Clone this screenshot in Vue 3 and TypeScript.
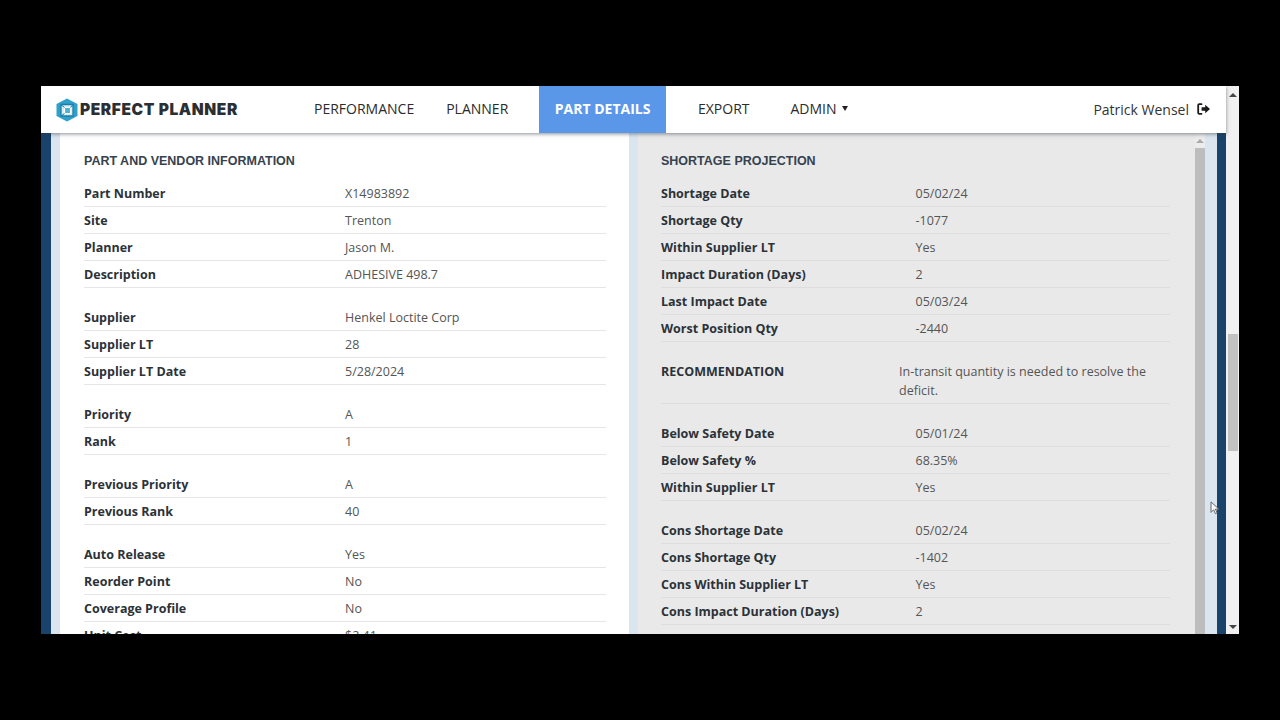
<script setup lang="ts">
interface Row { label: string; value: string; wide?: boolean }
const nav = ['PERFORMANCE', 'PLANNER', 'PART DETAILS', 'EXPORT']
const left: Row[][] = [
  [
    { label: 'Part Number', value: 'X14983892' },
    { label: 'Site', value: 'Trenton' },
    { label: 'Planner', value: 'Jason M.' },
    { label: 'Description', value: 'ADHESIVE 498.7' },
  ],
  [
    { label: 'Supplier', value: 'Henkel Loctite Corp' },
    { label: 'Supplier LT', value: '28' },
    { label: 'Supplier LT Date', value: '5/28/2024' },
  ],
  [
    { label: 'Priority', value: 'A' },
    { label: 'Rank', value: '1' },
  ],
  [
    { label: 'Previous Priority', value: 'A' },
    { label: 'Previous Rank', value: '40' },
  ],
  [
    { label: 'Auto Release', value: 'Yes' },
    { label: 'Reorder Point', value: 'No' },
    { label: 'Coverage Profile', value: 'No' },
    { label: 'Unit Cost', value: '$2.41' },
  ],
]
const right: Row[][] = [
  [
    { label: 'Shortage Date', value: '05/02/24' },
    { label: 'Shortage Qty', value: '-1077' },
    { label: 'Within Supplier LT', value: 'Yes' },
    { label: 'Impact Duration (Days)', value: '2' },
    { label: 'Last Impact Date', value: '05/03/24' },
    { label: 'Worst Position Qty', value: '-2440' },
  ],
  [
    { label: 'RECOMMENDATION', value: 'In-transit quantity is needed to resolve the deficit.', wide: true },
  ],
  [
    { label: 'Below Safety Date', value: '05/01/24' },
    { label: 'Below Safety %', value: '68.35%' },
    { label: 'Within Supplier LT', value: 'Yes' },
  ],
  [
    { label: 'Cons Shortage Date', value: '05/02/24' },
    { label: 'Cons Shortage Qty', value: '-1402' },
    { label: 'Cons Within Supplier LT', value: 'Yes' },
    { label: 'Cons Impact Duration (Days)', value: '2' },
    { label: 'Cons Last Impact Date', value: '05/03/24' },
  ],
]
</script>

<template>
  <div class="stage">
    <div class="window">
      <div class="page">
        <header class="topbar">
          <div class="brand">
            <svg class="logo" viewBox="0 0 22 24" width="22" height="24" aria-hidden="true">
              <path d="M11 .5 21.500 6v12L11 23.500.5 18V6z" fill="#2f9fcb" />
              <path d="M5 6.500h12v11.500H5z" fill="#d8eef6" />
              <path d="M5 6.500h12v11.500H5z" fill="none" stroke="#1c7ea6" stroke-width="1.300" />
              <path d="M8.500 9.500h6v6h-6z" fill="#4fb0d4" stroke="#fff" stroke-width="1.200" />
              <path d="M5 6.500 8.500 9.500M17 6.500 14.500 9.500M5 18 8.500 15.500" stroke="#1c7ea6" stroke-width="1" />
            </svg>
            <span class="brand-name">PERFECT PLANNER</span>
          </div>
          <nav class="nav">
            <a
              v-for="item in nav"
              :key="item"
              class="nav-item"
              :class="{ active: item === 'PART DETAILS' }"
            >{{ item }}</a>
            <a class="nav-item admin">ADMIN<span class="caret"></span></a>
          </nav>
          <div class="user">
            <span>Patrick Wensel</span>
            <svg viewBox="0 0 14 12" width="14" height="12" aria-hidden="true">
              <path d="M4.500 1.200H2.300C1.600 1.200 1.200 1.600 1.200 2.300v7.400c0 .7.4 1.100 1.100 1.100h2.200" fill="none" stroke="#1a1a1a" stroke-width="1.800" stroke-linecap="round" />
              <path d="M8.200 1.800 13 6 8.200 10.200V7.800H4.600V4.200h3.600z" fill="#1a1a1a" />
            </svg>
          </div>
        </header>
        <main class="content">
          <div class="panel-wrap">
            <section class="card">
              <h2 class="card-title">PART AND VENDOR INFORMATION</h2>
              <div v-for="(group, g) in left" :key="g" class="group">
                <div v-for="row in group" :key="row.label" class="row">
                  <span class="label">{{ row.label }}</span>
                  <span class="value">{{ row.value }}</span>
                </div>
              </div>
            </section>
            <div class="scroll-pane">
              <section class="card shaded">
                <h2 class="card-title">SHORTAGE PROJECTION</h2>
                <div v-for="(group, g) in right" :key="g" class="group">
                  <div v-for="row in group" :key="row.label" class="row" :class="{ wide: row.wide }">
                    <span class="label">{{ row.label }}</span>
                    <span class="value">{{ row.value }}</span>
                  </div>
                </div>
              </section>
              <div class="inner-scroll">
                <span class="arrow up small"></span>
                <span class="inner-thumb"></span>
              </div>
            </div>
          </div>
        </main>
      </div>
      <div class="outer-scroll">
        <span class="arrow up"></span>
        <span class="outer-thumb"></span>
        <span class="arrow down"></span>
      </div>
      <svg class="cursor" viewBox="0 0 10 16" width="9" height="14" aria-hidden="true">
        <path d="M1 1v12l3-3 2 4.500 2-1-2-4.200h4z" fill="#f4f6f8" stroke="#555" stroke-width="1" />
      </svg>
    </div>
  </div>
</template>

<style>
html,
body {
  margin: 0;
  background: #000;
}
</style>

<style scoped>
.stage {
  width: 1280px;
  height: 720px;
  box-sizing: border-box;
  padding: 86px 41px;
  background: #000;
  overflow: hidden;
}
.window {
  position: relative;
  display: flex;
  width: 1198px;
  height: 548px;
  overflow: hidden;
  background: #fff;
}
.page {
  flex: 1;
  min-width: 0;
  display: flex;
  flex-direction: column;
}
.topbar {
  position: relative;
  z-index: 2;
  flex: none;
  height: 47px;
  display: flex;
  align-items: center;
  background: #fff;
  box-shadow: 0 1px 4px rgba(40, 50, 60, 0.55);
}
.brand {
  width: 257px;
  box-sizing: border-box;
  padding-left: 15px;
  display: flex;
  align-items: center;
}
.logo {
  flex: none;
}
.brand-name {
  margin-left: 2px;
  font: 900 15.500px "Inter", "Liberation Sans", sans-serif;
  letter-spacing: 0.600px;
  color: #2b2f33;
  white-space: nowrap;
}
.nav {
  display: flex;
  align-items: stretch;
  height: 47px;
}
.nav-item {
  display: flex;
  align-items: center;
  padding: 0 16px 2px;
  font: 400 14px "Open Sans", sans-serif;
  color: #2b2b2b;
  white-space: nowrap;
}
.nav-item.active {
  margin: 0 16px 0 15px;
  padding: 0 15.500px 2px;
  background: #5b97e8;
  color: #fff;
  font-weight: 700;
}
.admin {
  margin-left: 9px;
}
.caret {
  margin-left: 5px;
  width: 0;
  height: 0;
  border-left: 3.500px solid transparent;
  border-right: 3.500px solid transparent;
  border-top: 5px solid #222;
}
.user {
  margin-left: auto;
  margin-right: 15px;
  padding-bottom: 1px;
  display: flex;
  align-items: center;
  gap: 8px;
  font: 400 14px "Open Sans", sans-serif;
  color: #333;
}
.content {
  flex: 1;
  min-height: 0;
  box-sizing: border-box;
  padding-left: 10px;
  background: #1a436b;
  border-right: 9px solid #1a436b;
  overflow: hidden;
}
.panel-wrap {
  display: flex;
  height: 100%;
  box-sizing: border-box;
  padding: 0 12px 0 9px;
  gap: 9px;
  background: #dbe5ef;
}
.card {
  box-sizing: border-box;
  width: 569px;
  flex: none;
  height: 100%;
  padding: 17px 23px 0 24px;
  background: #fff;
  overflow: hidden;
}
.scroll-pane {
  display: flex;
  width: 567px;
  height: 100%;
}
.card.shaded {
  width: 557px;
  padding: 17px 25px 0 23px;
  background: #e9e9e9;
}
.card-title {
  margin: 0 0 8px;
  font: 700 12.500px/22px "Liberation Sans", sans-serif;
  color: #36424e;
}
.group {
  margin-bottom: 16px;
}
.row {
  display: flex;
  box-sizing: border-box;
  min-height: 27px;
  padding: 4px 0 3px;
  border-bottom: 1px solid #e6e6e6;
  font: 400 12.500px/19px "Open Sans", sans-serif;
}
.shaded .row {
  border-bottom-color: #dedede;
}
.label {
  flex: 0 0 50%;
  font-weight: 700;
  color: #2b3238;
}
.value {
  flex: 1;
  color: #555;
}
.row.wide .label {
  flex: 0 0 238px;
}
.inner-scroll {
  flex: none;
  width: 10px;
  background: #ececec;
  display: flex;
  flex-direction: column;
  align-items: center;
}
.inner-thumb {
  flex: 1;
  align-self: stretch;
  margin-top: 5px;
  background: #bdbdbd;
}
.outer-scroll {
  flex: none;
  width: 13px;
  height: 100%;
  background: #f1f1f1;
  display: flex;
  flex-direction: column;
  align-items: center;
  padding: 7px 0 5px;
  box-sizing: border-box;
}
.outer-thumb {
  width: 10px;
  height: 117px;
  margin-top: 237px;
  margin-bottom: auto;
  background: #c2c2c2;
}
.arrow {
  flex: none;
  width: 0;
  height: 0;
  border-left: 4px solid transparent;
  border-right: 4px solid transparent;
}
.arrow.up {
  border-bottom: 4px solid #444;
}
.arrow.down {
  border-top: 4px solid #444;
}
.arrow.up.small {
  margin-top: 6px;
  border-bottom-color: #aaa;
}
.cursor {
  position: absolute;
  left: 1169px;
  top: 415px;
}
</style>
